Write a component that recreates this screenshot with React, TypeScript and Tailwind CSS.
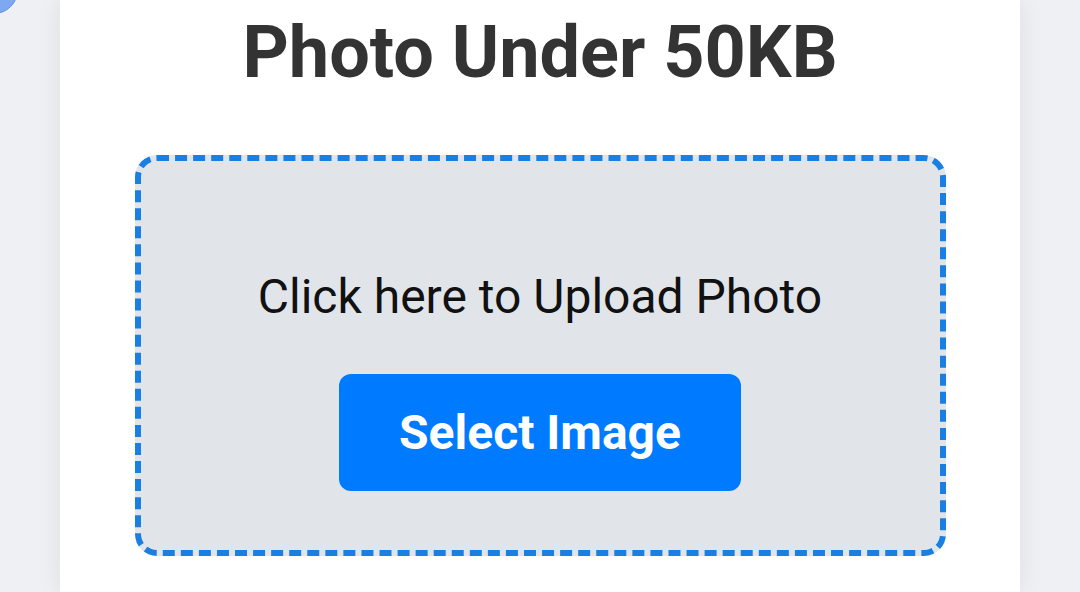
export default function App() {
  return (
    <div className="relative w-[1080px] h-[592px] overflow-hidden bg-[#eef0f4] font-['Roboto',sans-serif]">

      {/* corner bubble */}
      <div className="absolute -left-[30px] -top-[34px] w-[48px] h-[48px] rounded-full bg-[#7ea9f2] border border-[#5d8fe6]" />

      {/* CARD */}
      <div className="mx-[60px] h-full bg-white shadow-[0_0_24px_rgba(0,0,0,0.08)] flex flex-col items-center">

        <h1 className="mt-[9px] text-[72px] leading-[88px] font-bold text-[#333333]">
          Photo Under 50KB
        </h1>

        {/* UPLOAD BOX */}
        <div
          className="
            mt-[58px]
            w-[811px]
            h-[401px]
            rounded-[22px]
            border-[6px]
            border-dashed
            border-[#1a7fe3]
            bg-[#e1e5ea]
            flex
            flex-col
            items-center
            pt-[108px]
          "
        >
          <p className="text-[48px] leading-[56px] text-[#111111]">
            Click here to Upload Photo
          </p>

          <button
            className="
              mt-[49px]
              w-[402px]
              h-[117px]
              rounded-[12px]
              bg-[#007bff]
              text-white
              text-[48px]
              font-bold
            "
          >
            Select Image
          </button>
        </div>

      </div>
    </div>
  );
}
